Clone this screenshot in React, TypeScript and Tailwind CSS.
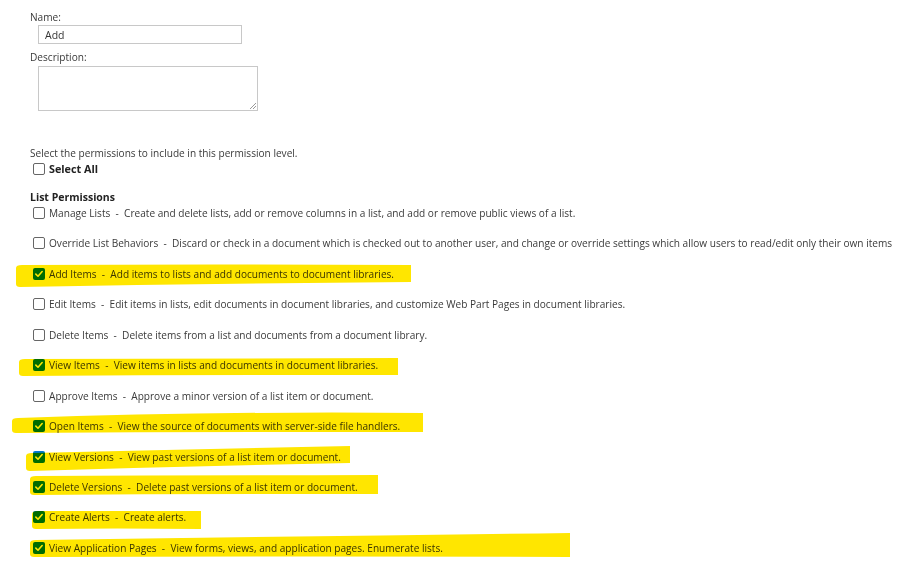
import React from "react";

type Mark = {
  x0: number;
  x1: number;
  tl: number;
  tr: number;
  bl: number;
  br: number;
  tm?: number;
};

type Perm = {
  name: string;
  desc: string;
  checked: boolean;
  mark?: Mark;
};

const perms: Perm[] = [
  {
    name: "Manage Lists",
    desc: "Create and delete lists, add or remove columns in a list, and add or remove public views of a list.",
    checked: false,
  },
  {
    name: "Override List Behaviors",
    desc: "Discard or check in a document which is checked out to another user, and change or override settings which allow users to read/edit only their own items",
    checked: false,
  },
  {
    name: "Add Items",
    desc: "Add items to lists and add documents to document libraries.",
    checked: true,
    mark: { x0: 16, x1: 411, tl: -9, tr: -9, bl: 13, br: 8, tm: -10 },
  },
  {
    name: "Edit Items",
    desc: "Edit items in lists, edit documents in document libraries, and customize Web Part Pages in document libraries.",
    checked: false,
  },
  {
    name: "Delete Items",
    desc: "Delete items from a list and documents from a document library.",
    checked: false,
  },
  {
    name: "View Items",
    desc: "View items in lists and documents in document libraries.",
    checked: true,
    mark: { x0: 19, x1: 398, tl: -6, tr: -7, bl: 11, br: 10 },
  },
  {
    name: "Approve Items",
    desc: "Approve a minor version of a list item or document.",
    checked: false,
  },
  {
    name: "Open Items",
    desc: "View the source of documents with server-side file handlers.",
    checked: true,
    mark: { x0: 12, x1: 423, tl: -8, tr: -13, bl: 7, br: 6, tm: -15 },
  },
  {
    name: "View Versions",
    desc: "View past versions of a list item or document.",
    checked: true,
    mark: { x0: 26, x1: 350, tl: -4, tr: -11, bl: 14, br: 6 },
  },
  {
    name: "Delete Versions",
    desc: "Delete past versions of a list item or document.",
    checked: true,
    mark: { x0: 30, x1: 378, tl: -11, tr: -12, bl: 8, br: 7 },
  },
  {
    name: "Create Alerts",
    desc: "Create alerts.",
    checked: true,
    mark: { x0: 32, x1: 201, tl: -6, tr: -6, bl: 12, br: 12 },
  },
  {
    name: "View Application Pages",
    desc: "View forms, views, and application pages. Enumerate lists.",
    checked: true,
    mark: { x0: 30, x1: 570, tl: -8, tr: -15, bl: 9, br: 9 },
  },
];

// Highlighter stroke laid over the row; y values are offsets from the text midline.
function Marker({ m }: { m: Mark }) {
  const c = 28;
  const mid = (m.x0 + m.x1) / 2;
  const tm = m.tm ?? (m.tl + m.tr) / 2;
  const d = [
    `M ${m.x0} ${c + m.tl + 3}`,
    `Q ${m.x0} ${c + m.tl} ${m.x0 + 6} ${c + m.tl}`,
    `Q ${mid} ${c + tm} ${m.x1} ${c + m.tr}`,
    `L ${m.x1} ${c + m.br}`,
    `Q ${mid} ${c + (m.bl + m.br) / 2 - 1} ${m.x0 + 4} ${c + m.bl}`,
    `Q ${m.x0} ${c + m.bl} ${m.x0} ${c + m.bl - 3}`,
    "Z",
  ].join(" ");
  return (
    <svg
      className="pointer-events-none absolute left-0 top-[-20px] h-[60px] w-[913px] mix-blend-multiply"
      viewBox="0 0 913 60"
    >
      <path d={d} fill="#ffe600" />
    </svg>
  );
}

function Box({ checked }: { checked: boolean }) {
  if (checked) {
    return (
      <span className="flex h-[12px] w-[12px] shrink-0 items-center justify-center rounded-[2px] bg-[#0078d4]">
        <svg viewBox="0 0 12 12" className="h-[10px] w-[10px]">
          <path
            d="M2.2 6.2 L4.8 8.7 L9.8 3"
            fill="none"
            stroke="#ffffff"
            strokeWidth="1.9"
            strokeLinecap="round"
            strokeLinejoin="round"
          />
        </svg>
      </span>
    );
  }
  return (
    <span className="h-[12px] w-[12px] shrink-0 rounded-[2px] border border-[#666666] bg-white" />
  );
}

function Row({ p }: { p: Perm }) {
  return (
    <div className="relative h-[30.45px]">
      <div className="relative flex h-4 items-center pl-[33px]">
        <Box checked={p.checked} />
        <span className="ml-[4px] whitespace-nowrap text-[#3a3a3a]">
          {p.name}
          {"\u00a0 -\u00a0 "}
          {p.desc}
        </span>
      </div>
      {p.mark && <Marker m={p.mark} />}
    </div>
  );
}

export default function App() {
  return (
    <div
      className="h-[569px] w-[913px] overflow-hidden bg-white pt-[9px] text-[10.1px] leading-4 text-[#3a3a3a]"
      style={{ fontFamily: '"Open Sans", "Noto Sans", sans-serif' }}
    >
      <div className="pl-[30px]">
        <div className="h-4">Name:</div>
        <div className="ml-[8px] flex h-[19px] w-[204px] items-center border border-[#c8c8c8] px-[6px] text-[10.5px] text-[#333333]">
          Add
        </div>
        <div className="mt-[5px] h-4">Description:</div>
        <div className="relative ml-[8px] mt-[1px] h-[45px] w-[220px] border border-[#c8c8c8]">
          <svg className="absolute bottom-[1px] right-[1px] h-[7px] w-[7px]" viewBox="0 0 7 7">
            <path d="M1 7 L7 1 M4 7 L7 4" stroke="#9a9a9a" strokeWidth="1" />
          </svg>
        </div>
        <div className="mt-[34px] h-4">Select the permissions to include in this permission level.</div>
        <div className="flex h-[28px] items-start pl-[3px]">
          <div className="flex h-4 items-center">
            <Box checked={false} />
            <span className="ml-[4px] text-[10.8px] font-bold text-[#222222]">Select All</span>
          </div>
        </div>
        <div className="h-4 text-[10.5px] font-bold text-[#222222]">List Permissions</div>
      </div>
      <div className="flex flex-col">
        {perms.map((p) => (
          <Row key={p.name} p={p} />
        ))}
      </div>
    </div>
  );
}
